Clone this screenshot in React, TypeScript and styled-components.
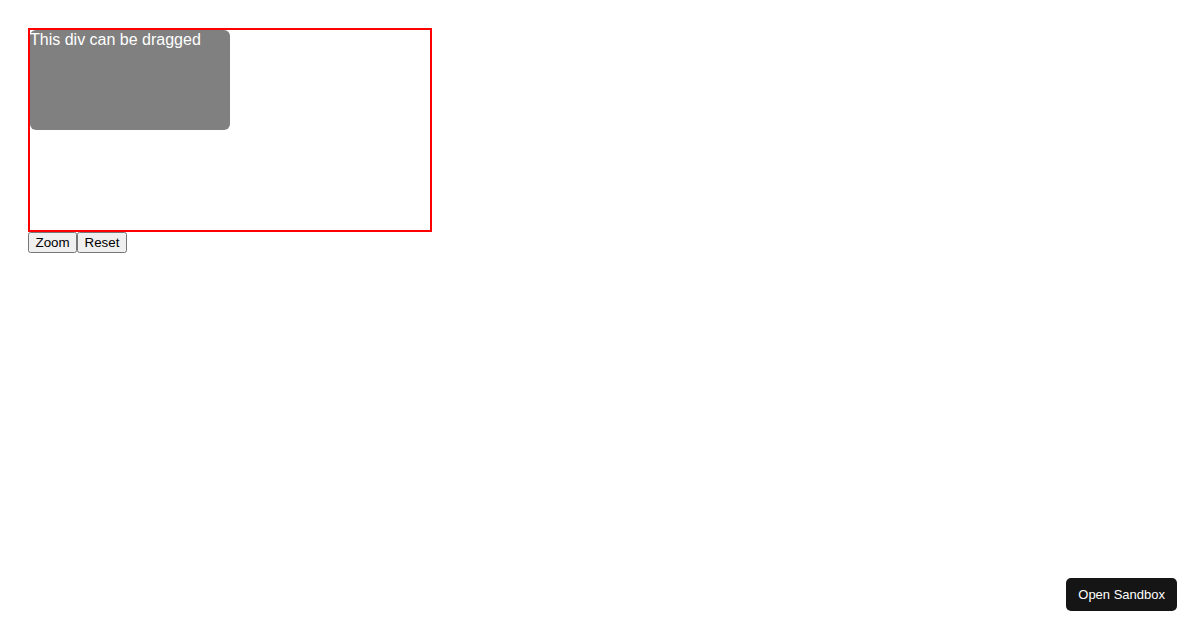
import React from "react";
import styled, { createGlobalStyle } from "styled-components";

const Global = createGlobalStyle`
  html, body { margin: 0; padding: 0; background: #fff; }
  body { font-family: "Liberation Sans", Arial, sans-serif; }
`;

const Page = styled.div`
  padding: 28px;
`;

const Stage = styled.div`
  width: 400px;
  height: 200px;
  border: 2px solid #ff0000;
  position: relative;
`;

const Draggable = styled.div`
  width: 200px;
  height: 100px;
  background: #808080;
  color: #fff;
  border-radius: 6px;
  font-family: "Liberation Sans", Arial, sans-serif;
  font-size: 16px;
  line-height: 19px;
  cursor: move;
`;

const Controls = styled.div`
  display: flex;
`;

const NativeButton = styled.button`
  font-family: "Liberation Sans", Arial, sans-serif;
  font-size: 13.333px;
  color: #000;
  padding: 1px 5.5px;
`;

const SandboxButton = styled.button`
  position: fixed;
  right: 23px;
  bottom: 19px;
  height: 33px;
  padding: 0 12px;
  background: #151515;
  color: #fff;
  border: none;
  border-radius: 5px;
  font-family: "Liberation Sans", Arial, sans-serif;
  font-size: 13px;
  cursor: pointer;
`;

export default function App() {
  return (
    <>
      <Global />
      <Page>
        <Stage>
          <Draggable>This div can be dragged</Draggable>
        </Stage>
        <Controls>
          <NativeButton>Zoom</NativeButton>
          <NativeButton>Reset</NativeButton>
        </Controls>
      </Page>
      <SandboxButton>Open Sandbox</SandboxButton>
    </>
  );
}
